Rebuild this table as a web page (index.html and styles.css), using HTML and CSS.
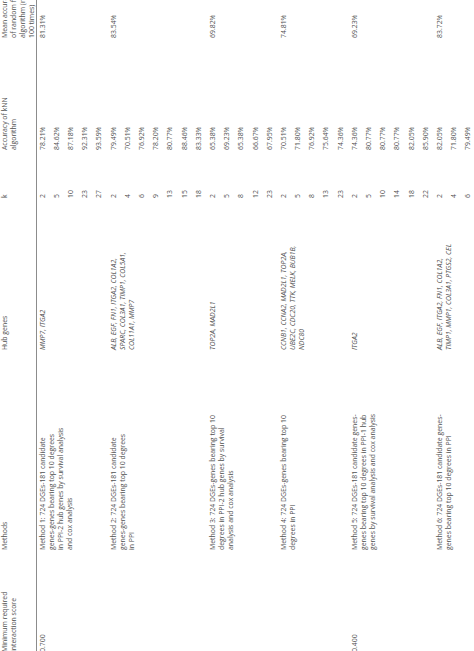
FILE: index.html
```html
<!DOCTYPE html>
<html>
<head>
<meta charset="utf-8">
<link rel="stylesheet" href="styles.css">
</head>
<body>
<div class="page">
  <div class="sheet">
    <div class="row head">
      <div>Minimum required<br>interaction score</div>
      <div>Methods</div>
      <div>Hub genes</div>
      <div>k</div>
      <div>Accuracy of kNN<br>algorithm</div>
      <div>Mean accuracy<br>of random forest<br>algorithm (rerun<br>100 times)</div>
    </div>
    <div class="body">
      <div class="row grp">
        <div class="line">0.700</div>
        <div class="wrap">Method 1: 724 DGEs-181 candidate<br>genes-genes bearing top 10 degrees<br>in PPI-2 hub genes by survival analysis<br>and cox analysis</div>
        <div class="wrap hub">MMP7, ITGA2</div>
        <div><div class="line">2</div><div class="line">5</div><div class="line">10</div><div class="line">23</div><div class="line">27</div></div>
        <div><div class="line">78.21%</div><div class="line">84.62%</div><div class="line">87.18%</div><div class="line">92.31%</div><div class="line">93.59%</div></div>
        <div class="line">81.31%</div>
      </div>
      <div class="row grp">
        <div></div>
        <div class="wrap">Method 2: 724 DGEs-181 candidate<br>genes-genes bearing top 10 degrees<br>in PPI</div>
        <div class="wrap hub">ALB, EGF, FN1, ITGA2, COL1A2,<br>SPARC, COL3A1, TIMP1, COL5A1,<br>COL11A1, MMP7</div>
        <div><div class="line">2</div><div class="line">4</div><div class="line">6</div><div class="line">9</div><div class="line">13</div><div class="line">15</div><div class="line">18</div></div>
        <div><div class="line">79.49%</div><div class="line">70.51%</div><div class="line">76.92%</div><div class="line">78.20%</div><div class="line">80.77%</div><div class="line">88.46%</div><div class="line">83.33%</div></div>
        <div class="line">83.54%</div>
      </div>
      <div class="row grp">
        <div></div>
        <div class="wrap">Method 3: 724 DGEs-genes bearing top 10<br>degrees in PPI-2 hub genes by survival<br>analysis and cox analysis</div>
        <div class="wrap hub">TOP2A, MAD2L1</div>
        <div><div class="line">2</div><div class="line">5</div><div class="line">8</div><div class="line">12</div><div class="line">23</div></div>
        <div><div class="line">65.38%</div><div class="line">69.23%</div><div class="line">65.38%</div><div class="line">66.67%</div><div class="line">67.95%</div></div>
        <div class="line">69.82%</div>
      </div>
      <div class="row grp">
        <div></div>
        <div class="wrap">Method 4: 724 DGEs-genes bearing top 10<br>degrees in PPI</div>
        <div class="wrap hub">CCNB1, CCNA2, MAD2L1, TOP2A,<br>UBE2C, CDC20, TTK, MELK, BUB1B,<br>NDC80</div>
        <div><div class="line">2</div><div class="line">5</div><div class="line">8</div><div class="line">13</div><div class="line">23</div></div>
        <div><div class="line">70.51%</div><div class="line">71.80%</div><div class="line">76.92%</div><div class="line">75.64%</div><div class="line">74.36%</div></div>
        <div class="line">74.81%</div>
      </div>
      <div class="row grp">
        <div class="line">0.400</div>
        <div class="wrap">Method 5: 724 DGEs-181 candidate genes-<br>genes bearing top 10 degrees in PPI-1 hub<br>genes by survival analysis and cox analysis</div>
        <div class="wrap hub">ITGA2</div>
        <div><div class="line">2</div><div class="line">5</div><div class="line">10</div><div class="line">14</div><div class="line">18</div><div class="line">22</div></div>
        <div><div class="line">74.36%</div><div class="line">80.77%</div><div class="line">80.77%</div><div class="line">80.77%</div><div class="line">82.05%</div><div class="line">85.90%</div></div>
        <div class="line">69.23%</div>
      </div>
      <div class="row grp">
        <div></div>
        <div class="wrap">Method 6: 724 DGEs-181 candidate genes-<br>genes bearing top 10 degrees in PPI</div>
        <div class="wrap hub">ALB, EGF, ITGA2, FN1, COL1A2,<br>TIMP1, MMP1, COL3A1, PTGS2, CEL</div>
        <div><div class="line">2</div><div class="line">4</div><div class="line">6</div></div>
        <div><div class="line">82.05%</div><div class="line">71.80%</div><div class="line">79.49%</div></div>
        <div class="line">83.72%</div>
      </div>
    </div>
  </div>
</div>
</body>
</html>
```

FILE: styles.css
```css
html, body {
  margin: 0;
  padding: 0;
  background: #ffffff;
}

.page {
  width: 474px;
  height: 651px;
  overflow: hidden;
  background: #ffffff;
}

.sheet {
  width: 720px;
  transform-origin: 0 0;
  transform: translateY(652px) rotate(-90deg);
  font-family: "Open Sans", "Noto Sans", sans-serif;
  font-size: 6.9px;
  color: #505050;
}

.row {
  display: grid;
  grid-template-columns: 102px 200px 152px 48px 112px 106px;
}

.head {
  height: 36px;
  line-height: 9px;
  border-bottom: 1px solid #8c8c8c;
  white-space: nowrap;
}

.body {
  margin-top: -1.3px;
}

.line {
  height: 14.2px;
  line-height: 14.2px;
  white-space: nowrap;
}

.wrap {
  line-height: 9px;
  padding-top: 2.2px;
  white-space: nowrap;
}

.hub {
  font-style: italic;
}
```
